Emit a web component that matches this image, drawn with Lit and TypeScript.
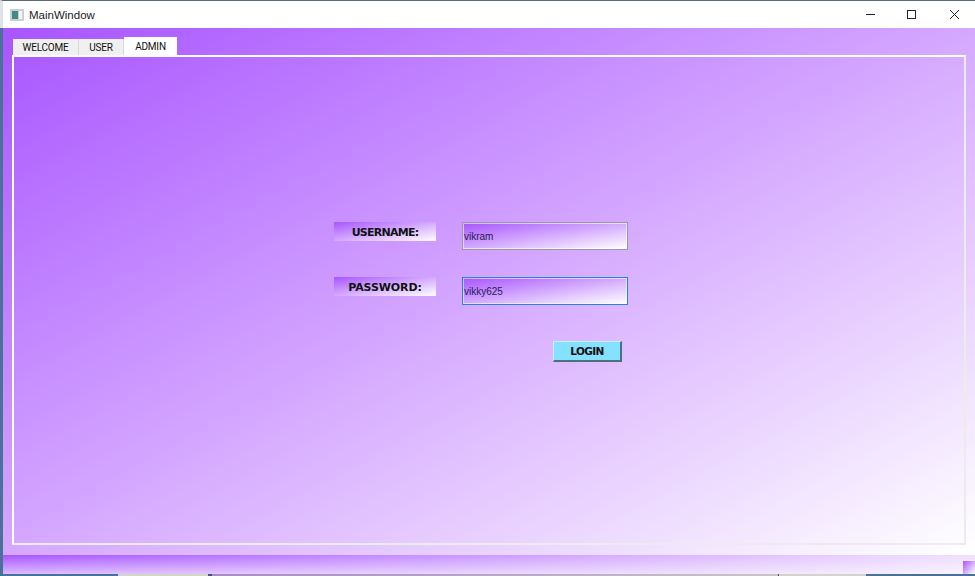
import { LitElement, html, css } from "lit";
import { customElement } from "lit/decorators.js";

@customElement("app-root")
export class AppRoot extends LitElement {
  static styles = css`
    :host { display: block; width: 975px; height: 576px; overflow: hidden; font-family: "Liberation Sans", sans-serif; background: #4a7199; }
    .win { display: flex; flex-direction: column; width: 975px; height: 576px; box-sizing: border-box; }
    .title { height: 28px; flex: none; background: #fff; display: flex; align-items: center; gap: 5px; color: #222; box-sizing: border-box; border-top: 1px solid #5b6b7b; border-left: 3px solid #dfe3e8; padding-left: 7px; }
    .title .name { flex: 1; font-size: 11.5px; }
    .ctrl { display: flex; }
    .ctrl span { width: 42px; height: 27px; display: flex; align-items: center; justify-content: center; }
    .body { flex: 1; min-height: 0; display: flex; flex-direction: column; margin-left: 3px; }
    .main { flex: 1; min-height: 0; background: linear-gradient(to bottom right, #a855ff 0%, #d5a8ff 50%, #ffffff 100%); padding: 9px 0 10px 9px; display: flex; flex-direction: column; box-sizing: border-box; }
    .tabs { display: flex; height: 18px; flex: none; align-items: flex-end; font-family: Roboto, "Liberation Sans", sans-serif; font-size: 10px; letter-spacing: -0.2px; color: #111; margin-left: 1px; }
    .tab { height: 16px; background: #f0f0f0; border-right: 1px solid #d9d9d9; display: flex; align-items: center; justify-content: center; box-sizing: border-box; }
    .tab.on { height: 18px; background: #fff; border: none; }
    .t1 { width: 66px; } .t2 { width: 45px; } .t3 { width: 53px; }
    .pane { flex: 1; min-height: 0; margin-right: 9px; border: 2px solid #fff; border-right-color: #ececec; border-bottom-color: #ececec; display: grid; grid-template-columns: 102px 166px; grid-template-rows: 28px 28px auto; column-gap: 26px; row-gap: 27px; align-content: start; justify-content: start; padding: 165px 0 0 320px; box-sizing: border-box; }
    .lab { height: 19px; box-sizing: border-box; padding-top: 1px; background: linear-gradient(to bottom right, #a855ff, #ffffff); font-family: "DejaVu Sans", sans-serif; font-weight: 700; font-size: 11px; display: flex; align-items: center; justify-content: center; color: #111; }
    .lab.u { letter-spacing: -0.75px; }
    .lab.p { letter-spacing: -0.1px; }
    .inp { height: 28px; box-sizing: border-box; background: linear-gradient(to bottom right, #a855ff, #ffffff); border: 1px solid #9a9a9a; box-shadow: inset 0 0 0 1px rgba(255,255,255,.55); display: flex; align-items: center; padding-left: 1px; font-size: 10px; color: #2a1a55; }
    .inp.focus { border-color: #1f86dc; }
    .btn { grid-column: 2; justify-self: start; margin-left: 91px; margin-top: 9px; width: 69px; height: 21px; box-sizing: border-box; background: #84e1ff; border-style: solid; border-width: 1px 2px 2px 1px; border-color: #c8f0ff #4f6f7c #4f6f7c #c8f0ff; font-family: "DejaVu Sans", sans-serif; font-weight: 700; font-size: 10.5px; letter-spacing: -0.6px; color: #111; display: flex; align-items: center; justify-content: center; }
    .status { height: 19px; flex: none; position: relative; background: linear-gradient(to bottom, rgba(255,255,255,0), rgba(255,255,255,.6)), linear-gradient(to right, #a855ff, #f0e0ff); }
    .grip { position: absolute; right: 0; bottom: 0; width: 12px; height: 13px; background: linear-gradient(to bottom right, #a855ff, #fff); }
    .strip { height: 2px; flex: none; display: flex; background: #4a7199; }
    .strip i { display: block; }
    .s1 { width: 118px; }
    .s2 { width: 90px; background: #d4d4cc; }
    .s3 { width: 4px; background: #3a5a7a; }
    .s4 { width: 566px; background: linear-gradient(to right, #a98cc0, #c8c4c8); }
    .s5 { width: 88px; box-sizing: border-box; background: #d4d4cc; border-left: 1px solid #3a5a7a; }
  `;
  render() {
    return html`<div class="win">
      <div class="title">
        <svg width="14" height="12" viewBox="0 0 14 12"><rect width="14" height="12" fill="#c9cfd2"/><rect x="2" y="2" width="6" height="8" fill="#3f8c86"/><rect x="9" y="2" width="3" height="8" fill="#f4f6f6"/></svg>
        <span class="name">MainWindow</span>
        <div class="ctrl">
          <span><svg width="11" height="11"><path d="M1 5.5H10" stroke="#222"/></svg></span>
          <span><svg width="11" height="11"><rect x="0.5" y="1.5" width="8" height="8" fill="none" stroke="#222"/></svg></span>
          <span><svg width="11" height="11"><path d="M1 1L10 10M10 1L1 10" stroke="#222"/></svg></span>
        </div>
      </div>
      <div class="body">
        <div class="main">
          <div class="tabs"><div class="tab t1">WELCOME</div><div class="tab t2">USER</div><div class="tab on t3">ADMIN</div></div>
          <div class="pane">
            <div class="lab u">USERNAME:</div><div class="inp">vikram</div>
            <div class="lab p">PASSWORD:</div><div class="inp focus">vikky625</div>
            <div class="btn">LOGIN</div>
          </div>
        </div>
        <div class="status"><div class="grip"></div></div>
      </div>
      <div class="strip"><i class="s1"></i><i class="s2"></i><i class="s3"></i><i class="s4"></i><i class="s5"></i></div>
    </div>`;
  }
}
